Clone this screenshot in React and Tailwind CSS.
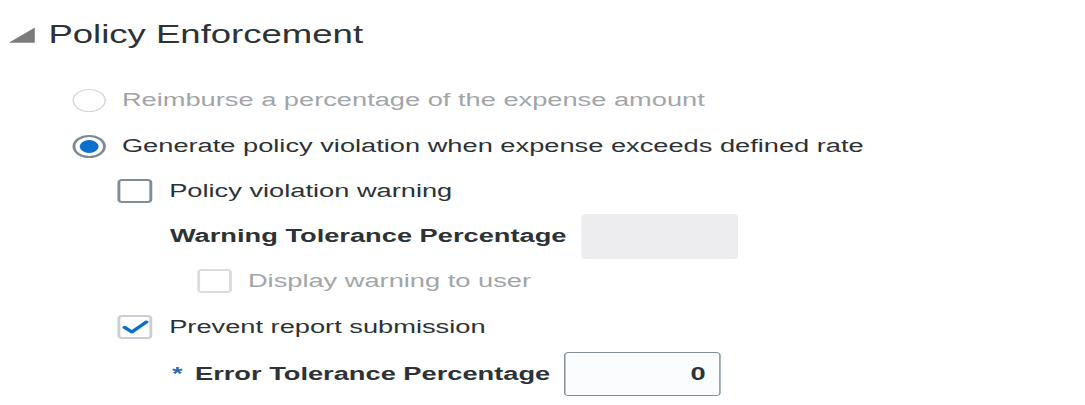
import React from "react";

const font = { fontFamily: '"Liberation Sans", Arial, sans-serif' };

function Radio({ checked, disabled }) {
  if (checked) {
    return (
      <span className="flex h-[23px] w-[23px] shrink-0 items-center justify-center rounded-full border-2 border-[#7d8a93] bg-white">
        <span className="h-[13px] w-[13px] rounded-full bg-[#0b6fce]" />
      </span>
    );
  }
  return (
    <span
      className={
        "h-[23px] w-[23px] shrink-0 rounded-full border-[1.5px] bg-white " +
        (disabled ? "border-[#d3d6d9]" : "border-[#7d8a93]")
      }
    />
  );
}

function Checkbox({ checked, disabled }) {
  return (
    <span
      className={
        "flex h-[24px] w-[24px] shrink-0 items-center justify-center rounded-[3px] border-2 bg-white " +
        (disabled
          ? "border-[#dadde0]"
          : checked
          ? "border-[#c9cfd4]"
          : "border-[#7f8d97]")
      }
    >
      {checked && (
        <svg viewBox="0 0 24 24" className="h-[22px] w-[22px]">
          <path
            d="M3.5 12.5 L9.5 18 L21.5 6"
            fill="none"
            stroke="#0b6fce"
            strokeWidth="3.6"
            strokeLinecap="round"
            strokeLinejoin="round"
          />
        </svg>
      )}
    </span>
  );
}

export default function App() {
  return (
    <div className="h-[405px] w-[1085px] overflow-hidden bg-white" style={font}>
      <div className="w-[748px] origin-top-left scale-x-[1.45] text-[18.8px] text-[#2c3236]">
        {/* header */}
        <div className="mt-[12px] flex h-[46px] items-center pl-[5.5px]">
          <svg viewBox="0 0 19 16" className="h-[16px] w-[18.6px] shrink-0">
            <polygon points="0,16 19,16 19,0" fill="#7b7b7b" />
          </svg>
          <span className="ml-[9.3px] text-[25.2px] leading-none">Policy Enforcement</span>
        </div>

        <div className="mt-[19px] flex flex-col">
          <div className="flex h-[46px] items-center pl-[49.7px]">
            <Radio disabled />
            <span className="ml-[11.4px] text-[#a2a5a8]">
              Reimburse a percentage of the expense amount
            </span>
          </div>

          <div className="flex h-[46px] items-center pl-[49.7px]">
            <Radio checked />
            <span className="ml-[11.4px]">
              Generate policy violation when expense exceeds defined rate
            </span>
          </div>

          <div className="flex h-[44px] items-center pl-[81.4px]">
            <Checkbox />
            <span className="ml-[11.3px]">Policy violation warning</span>
          </div>

          <div className="flex h-[46px] items-center pl-[117.2px]">
            <span className="w-[284.2px] font-bold">Warning Tolerance Percentage</span>
            <div className="h-[45px] w-[107.6px] rounded-[3px] bg-[#ededef]" />
          </div>

          <div className="flex h-[44px] items-center pl-[135.9px]">
            <Checkbox disabled />
            <span className="ml-[11.1px] text-[#a2a5a8]">Display warning to user</span>
          </div>

          <div className="flex h-[48px] items-center pl-[81.4px]">
            <Checkbox checked />
            <span className="ml-[11.3px]">Prevent report submission</span>
          </div>

          <div className="flex h-[46px] items-center pl-[118.6px]">
            <span className="w-[15.9px] font-bold text-[#2f6db0]">*</span>
            <span className="w-[254.5px] font-bold">Error Tolerance Percentage</span>
            <div className="flex h-[44px] w-[107.6px] items-center justify-end rounded-[3px] border-[1.5px] border-[#7f8d97] bg-[#fbfcfe] pr-[9px] font-bold">
              0
            </div>
          </div>
        </div>
      </div>
    </div>
  );
}
